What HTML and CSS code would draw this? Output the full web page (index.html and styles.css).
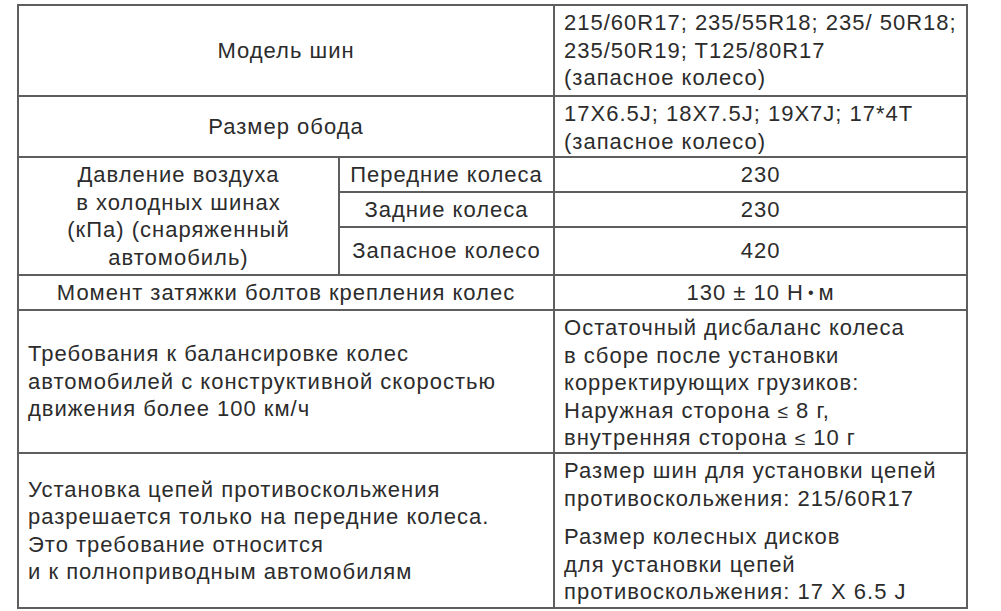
FILE: index.html
```html
<!DOCTYPE html>
<html lang="ru">
<head>
<meta charset="utf-8">
<title>Шины и колеса</title>
<link rel="stylesheet" href="styles.css">
</head>
<body>
<table class="spec">
  <colgroup>
    <col class="c1">
    <col class="c2">
    <col class="c3">
  </colgroup>
  <tr class="r-model">
    <td colspan="2" class="center">Модель шин</td>
    <td class="top">215/60R17; 235/55R18; 235/ 50R18;<br>235/50R19; T125/80R17<br>(запасное колесо)</td>
  </tr>
  <tr class="r-rim">
    <td colspan="2" class="center">Размер обода</td>
    <td class="top">17X6.5J; 18X7.5J; 19X7J; 17*4T<br>(запасное колесо)</td>
  </tr>
  <tr class="r-p1">
    <td rowspan="3" class="center">Давление воздуха<br>в холодных шинах<br>(кПа) (снаряженный<br>автомобиль)</td>
    <td class="center">Передние колеса</td>
    <td class="center">230</td>
  </tr>
  <tr class="r-p2">
    <td class="center">Задние колеса</td>
    <td class="center">230</td>
  </tr>
  <tr class="r-p3">
    <td class="center">Запасное колесо</td>
    <td class="center">420</td>
  </tr>
  <tr class="r-torque">
    <td colspan="2" class="center">Момент затяжки болтов крепления колес</td>
    <td class="center">130 ± 10 Н<span class="dot">•</span>м</td>
  </tr>
  <tr class="r-balance">
    <td colspan="2" class="left">Требования к балансировке колес<br>автомобилей с конструктивной скоростью<br>движения более 100 км/ч</td>
    <td class="top">Остаточный дисбаланс колеса<br>в сборе после установки<br>корректирующих грузиков:<br>Наружная сторона <span class="le">≤</span> 8 г,<br>внутренняя сторона <span class="le">≤</span> 10 г</td>
  </tr>
  <tr class="r-chains">
    <td colspan="2" class="left">Установка цепей противоскольжения<br>разрешается только на передние колеса.<br>Это требование относится<br>и к полноприводным автомобилям</td>
    <td class="top">
      <p class="para">Размер шин для установки цепей<br>противоскольжения: 215/60R17</p>
      <p class="para">Размер колесных дисков<br>для установки цепей<br>противоскольжения: 17 X 6.5 J</p>
    </td>
  </tr>
</table>
</body>
</html>
```

FILE: styles.css
```css
html, body {
  margin: 0;
  padding: 0;
  background: #ffffff;
}

body {
  padding: 4px 0 0 17px;
  font-family: "Liberation Sans", Arial, sans-serif;
  font-size: 22px;
  line-height: 27.5px;
  color: #2c2c2c;
}

.spec {
  border-collapse: collapse;
  table-layout: fixed;
  width: 949px;
}

.c1 { width: 321px; }
.c2 { width: 215px; }
.c3 { width: 413px; }

.spec td {
  border: 2px solid #5e5e5e;
  padding: 0 9px;
  white-space: nowrap;
  letter-spacing: 1px;
}

.center {
  text-align: center;
  vertical-align: middle;
}

.left {
  text-align: left;
  vertical-align: middle;
}

.top {
  text-align: left;
  vertical-align: top;
  padding-top: 3px !important;
}

.dot {
  font-size: 16px;
  line-height: 0;
  margin: 0 4px;
  position: relative;
  top: -2px;
}

.le {
  font-size: 19px;
  line-height: 0;
}

.r-model { height: 91px; }
.r-rim { height: 61px; }
.r-p1 { height: 35px; }
.r-p2 { height: 35px; }
.r-p3 { height: 48px; }
.r-torque { height: 35px; }
.r-balance { height: 143px; }
.r-chains { height: 155px; }

.para {
  margin: 0;
}

.para + .para {
  margin-top: 11px;
}
```
